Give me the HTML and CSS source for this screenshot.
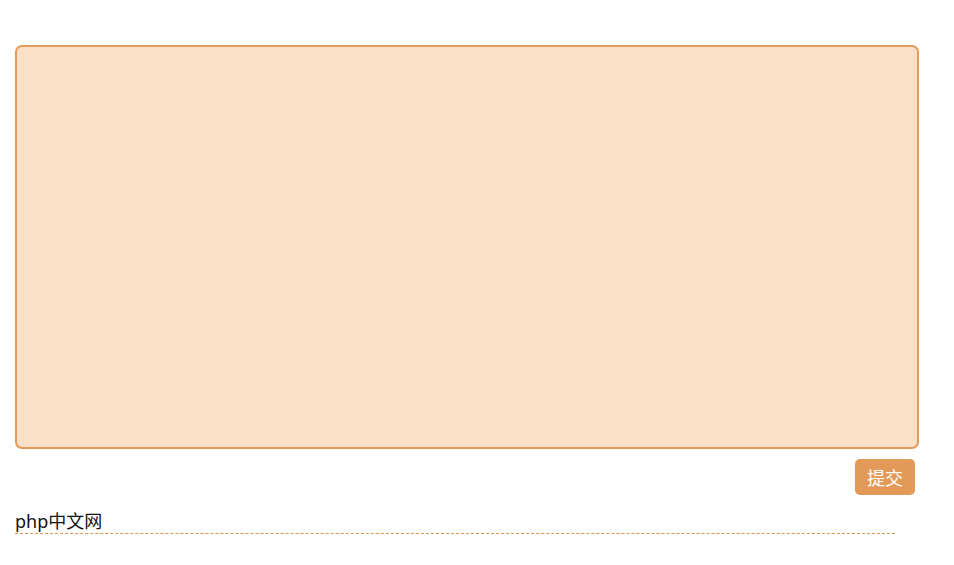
FILE: index.html
```html
<!DOCTYPE html>
<html lang="zh">
<head>
<meta charset="utf-8">
<link rel="stylesheet" href="styles.css">
</head>
<body>
<div class="wrap">
  <textarea class="box"></textarea>
  <div class="actions"><button class="submit">提交</button></div>
  <div class="item">php中文网</div>
</div>
</body>
</html>
```
FILE: styles.css
```css
html, body { margin: 0; padding: 0; background: #fff; }
body { font-family: "Noto Sans", "Noto Sans CJK SC", sans-serif; }
.wrap { padding: 45px 0 0 15px; width: 903px; }
.box {
  display: block;
  box-sizing: border-box;
  width: 904px;
  height: 404px;
  margin: 0;
  border: 2px solid #e39a5a;
  border-radius: 7px;
  background: #f9e0c7;
  resize: none;
  outline: none;
}
.actions { display: flex; justify-content: flex-end; padding: 10px 3px 0 0; }
.submit {
  width: 60px;
  height: 36px;
  border: none;
  border-radius: 5px;
  background: #e39a58;
  color: #fff;
  font-family: "Noto Sans CJK SC", sans-serif;
  font-size: 18px;
  padding: 0;
}
.item {
  margin-top: 14px;
  width: 880px;
  font-size: 18px;
  line-height: 24px;
  color: #111;
  border-bottom: 1px dashed #e0944f;
  font-family: "Noto Sans", "Noto Sans CJK SC", sans-serif;
}
```
